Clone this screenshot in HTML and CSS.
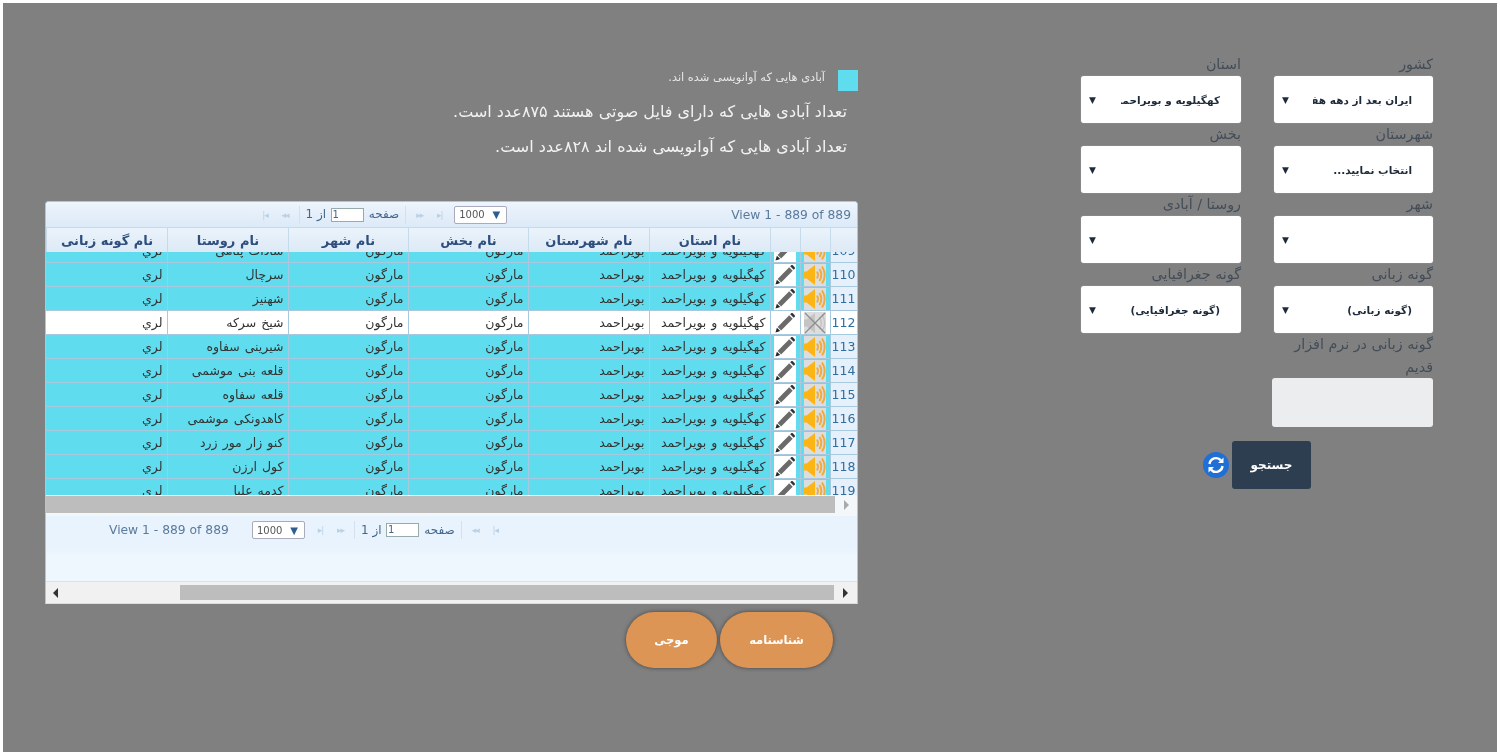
FILE: index.html
```html
<!DOCTYPE html>
<html lang="fa">
<head>
<meta charset="utf-8">
<title>جستجو</title>
<link rel="stylesheet" href="styles.css">
</head>
<body>
<svg class="defs" aria-hidden="true">
  <symbol id="pencil" viewBox="0 0 22 22">
    <path d="M1.500 20.500l1.400-4.700 3.300 3.300z" fill="#222"/>
    <path d="M3.600 14.900L15.200 3.300l3.500 3.500L7.100 18.400z" fill="#6a6a6a"/>
    <path d="M16.200 2.300l1-1c.5-.5 1.100-.5 1.600 0l1.900 1.900c.5.5.5 1.100 0 1.600l-1 1z" fill="#333"/>
  </symbol>
  <symbol id="speaker" viewBox="0 0 22 22">
    <path d="M0 7.500h2.500L11 1v20l-8.500-6.500H0z" fill="#fdb515"/>
    <path d="M13 7.500c1.300 2.300 1.300 4.700 0 7M15.500 5c2.300 3.800 2.300 8.200 0 12M18 2.500c3.500 5.500 3.500 11.500 0 17" fill="none" stroke="#f0ab40" stroke-width="2"/>
  </symbol>
  <symbol id="nosound" viewBox="0 0 22 22">
    <path d="M0 7.500h2.500L11 1v20l-8.500-6.500H0z" fill="#c4c4c4"/>
    <path d="M15.500 5c2.300 3.800 2.300 8.200 0 12M18 2.500c3.500 5.500 3.500 11.500 0 17" fill="none" stroke="#c4c4c4" stroke-width="1.500"/>
    <path d="M1 1l20 20M21 1L1 21" stroke="#8d8d8d" stroke-width="1.300"/>
  </symbol>
</svg>

<main class="stage">
  <section class="results">
    <div class="legend" dir="rtl">
      <span class="swatch"></span>
      <span class="legend-text">آبادی هایی که آوانویسی شده اند.</span>
    </div>
    <p class="stat" dir="rtl">تعداد آبادی هایی که دارای فایل صوتی هستند ۸۷۵عدد است.</p>
    <p class="stat" dir="rtl">تعداد آبادی هایی که آوانویسی شده اند ۸۲۸عدد است.</p>

    <div class="grid">
      <div class="pager pager-top">
        <div class="pager-nav">
          <span class="pg-icon">|◂</span><span class="pg-icon">◂◂</span>
          <span class="sep"></span>
          <span class="pg-text" dir="rtl">صفحه <span class="pg-input">1</span> از 1</span>
          <span class="sep"></span>
          <span class="pg-icon">▸▸</span><span class="pg-icon">▸|</span>
          <span class="pg-select">1000 <b>▼</b></span>
        </div>
        <span class="view">View 1 - 889 of 889</span>
      </div>

      <table class="thead" dir="rtl">
        <colgroup><col class="c-n"><col class="c-i"><col class="c-i"><col class="c-a"><col class="c-a"><col class="c-b"><col class="c-b"><col class="c-a"><col class="c-a"></colgroup>
        <tr><th></th><th></th><th></th><th>نام استان</th><th>نام شهرستان</th><th>نام بخش</th><th>نام شهر</th><th>نام روستا</th><th>نام گونه زبانی</th></tr>
      </table>

      <div class="tbody">
        <table class="rows" dir="rtl">
          <colgroup><col class="c-n"><col class="c-i"><col class="c-i"><col class="c-a"><col class="c-a"><col class="c-b"><col class="c-b"><col class="c-a"><col class="c-a"></colgroup>
          <tr><td class="num">109</td><td class="ic"><svg class="snd"><use href="#speaker"/></svg></td><td class="ic"><svg class="pen"><use href="#pencil"/></svg></td><td>کهگیلویه و بویراحمد</td><td>بویراحمد</td><td>مارگون</td><td>مارگون</td><td>سادات پناهی</td><td>لري</td></tr>
          <tr><td class="num">110</td><td class="ic"><svg class="snd"><use href="#speaker"/></svg></td><td class="ic"><svg class="pen"><use href="#pencil"/></svg></td><td>کهگیلویه و بویراحمد</td><td>بویراحمد</td><td>مارگون</td><td>مارگون</td><td>سرچال</td><td>لري</td></tr>
          <tr><td class="num">111</td><td class="ic"><svg class="snd"><use href="#speaker"/></svg></td><td class="ic"><svg class="pen"><use href="#pencil"/></svg></td><td>کهگیلویه و بویراحمد</td><td>بویراحمد</td><td>مارگون</td><td>مارگون</td><td>شهنیز</td><td>لري</td></tr>
          <tr class="plain"><td class="num">112</td><td class="ic"><svg class="snd"><use href="#nosound"/></svg></td><td class="ic"><svg class="pen"><use href="#pencil"/></svg></td><td>کهگیلویه و بویراحمد</td><td>بویراحمد</td><td>مارگون</td><td>مارگون</td><td>شیخ سرکه</td><td>لري</td></tr>
          <tr><td class="num">113</td><td class="ic"><svg class="snd"><use href="#speaker"/></svg></td><td class="ic"><svg class="pen"><use href="#pencil"/></svg></td><td>کهگیلویه و بویراحمد</td><td>بویراحمد</td><td>مارگون</td><td>مارگون</td><td>شیرینی سفاوه</td><td>لري</td></tr>
          <tr><td class="num">114</td><td class="ic"><svg class="snd"><use href="#speaker"/></svg></td><td class="ic"><svg class="pen"><use href="#pencil"/></svg></td><td>کهگیلویه و بویراحمد</td><td>بویراحمد</td><td>مارگون</td><td>مارگون</td><td>قلعه بنی موشمی</td><td>لري</td></tr>
          <tr><td class="num">115</td><td class="ic"><svg class="snd"><use href="#speaker"/></svg></td><td class="ic"><svg class="pen"><use href="#pencil"/></svg></td><td>کهگیلویه و بویراحمد</td><td>بویراحمد</td><td>مارگون</td><td>مارگون</td><td>قلعه سفاوه</td><td>لري</td></tr>
          <tr><td class="num">116</td><td class="ic"><svg class="snd"><use href="#speaker"/></svg></td><td class="ic"><svg class="pen"><use href="#pencil"/></svg></td><td>کهگیلویه و بویراحمد</td><td>بویراحمد</td><td>مارگون</td><td>مارگون</td><td>کاهدونکی موشمی</td><td>لري</td></tr>
          <tr><td class="num">117</td><td class="ic"><svg class="snd"><use href="#speaker"/></svg></td><td class="ic"><svg class="pen"><use href="#pencil"/></svg></td><td>کهگیلویه و بویراحمد</td><td>بویراحمد</td><td>مارگون</td><td>مارگون</td><td>کنو زار مور زرد</td><td>لري</td></tr>
          <tr><td class="num">118</td><td class="ic"><svg class="snd"><use href="#speaker"/></svg></td><td class="ic"><svg class="pen"><use href="#pencil"/></svg></td><td>کهگیلویه و بویراحمد</td><td>بویراحمد</td><td>مارگون</td><td>مارگون</td><td>کول ارزن</td><td>لري</td></tr>
          <tr><td class="num">119</td><td class="ic"><svg class="snd"><use href="#speaker"/></svg></td><td class="ic"><svg class="pen"><use href="#pencil"/></svg></td><td>کهگیلویه و بویراحمد</td><td>بویراحمد</td><td>مارگون</td><td>مارگون</td><td>کدمه علیا</td><td>لري</td></tr>
        </table>
      </div>

      <div class="hscroll inner">
        <span class="thumb"></span>
        <span class="arrow-box"><i class="tri tri-r faint"></i></span>
      </div>

      <div class="footer">
        <div class="pager pager-bot">
          <span class="view">View 1 - 889 of 889</span>
          <div class="pager-nav bot-nav">
            <span class="pg-select">1000 <b>▼</b></span>
            <span class="pg-icon">▸|</span><span class="pg-icon">▸▸</span>
            <span class="sep"></span>
            <span class="pg-text" dir="rtl">صفحه <span class="pg-input">1</span> از 1</span>
            <span class="sep"></span>
            <span class="pg-icon">◂◂</span><span class="pg-icon">|◂</span>
          </div>
        </div>
      </div>

      <div class="hscroll outer">
        <span class="arrow-left"><i class="tri tri-l"></i></span>
        <span class="thumb"></span>
        <span class="arrow-box"><i class="tri tri-r"></i></span>
      </div>
    </div>

    <div class="actions">
      <button class="pill pill-s" type="button">موجی</button>
      <button class="pill pill-l" type="button">شناسنامه</button>
    </div>
  </section>

  <form class="filters" dir="rtl">
    <div class="field"><label>کشور</label><div class="select"><span class="val">ایران بعد از دهه هفتاد</span><b class="caret">▼</b></div></div>
    <div class="field"><label>استان</label><div class="select"><span class="val">کهگیلویه و بویراحمد</span><b class="caret">▼</b></div></div>
    <div class="field"><label>شهرستان</label><div class="select"><span class="val">انتخاب نمایید...</span><b class="caret">▼</b></div></div>
    <div class="field"><label>بخش</label><div class="select"><span class="val"></span><b class="caret">▼</b></div></div>
    <div class="field"><label>شهر</label><div class="select"><span class="val"></span><b class="caret">▼</b></div></div>
    <div class="field"><label>روستا / آبادی</label><div class="select"><span class="val"></span><b class="caret">▼</b></div></div>
    <div class="field"><label>گونه زبانی</label><div class="select"><span class="val">(گونه زبانی)</span><b class="caret">▼</b></div></div>
    <div class="field"><label>گونه جغرافیایی</label><div class="select"><span class="val">(گونه جغرافیایی)</span><b class="caret">▼</b></div></div>
    <div class="field field-old"><label>گونه زبانی در نرم افزار قدیم</label><div class="readonly"></div></div>
    <div class="search-row">
      <button class="search" type="button">جستجو</button>
      <span class="refresh">
        <svg viewBox="0 0 26 26" width="26" height="26"><path d="M6.500 12a6.600 6.600 0 0 1 11.500-3.600M19.500 14a6.600 6.600 0 0 1-11.500 3.600" fill="none" stroke="#fff" stroke-width="2.400"/><path d="M20.500 5.500v5.500h-5.500zM5.500 20.500V15H11z" fill="#fff"/></svg>
      </span>
    </div>
  </form>
</main>
</body>
</html>
```

FILE: styles.css
```css
* { box-sizing: border-box; }
html, body { margin: 0; height: 100%; background: #fff; }
body { padding: 3px; font-family: "DejaVu Sans", "Liberation Sans", sans-serif; overflow: hidden; }
.defs { display: none; }

.stage {
  height: 749px;
  background: #808080;
  display: flex;
  justify-content: space-between;
  align-items: flex-start;
  padding: 0 64px 0 42px;
  filter: blur(.5px);
}

/* left column */
.results { width: 813px; padding-top: 66px; }
.legend { display: flex; align-items: center; gap: 13px; height: 22px; }
.swatch { width: 20px; height: 21px; background: #5fdcee; }
.legend-text { font-size: 11.400px; color: #e6e6e6; position: relative; top: -3px; }
.stat { margin: 0; font-size: 16px; line-height: 35px; color: #f2f2f2; padding-right: 11px; }
.stat:first-of-type { margin-top: 3px; }

.grid {
  margin-top: 37px;
  height: 403px;
  background: #fff;
  border: 1px solid #a6c9e2;
  border-bottom-color: #ddd;
  border-radius: 4px 4px 0 0;
  display: flex;
  flex-direction: column;
  overflow: hidden;
}
.pager { display: flex; align-items: center; color: #5a7ea3; font-size: 11px; }
.pager-top {
  height: 26px;
  flex: none;
  justify-content: flex-end;
  padding: 0 6px 0 0;
  background: linear-gradient(#edf5fd, #dce9f7);
  border-bottom: 1px solid #c5dbec;
}
.pager-nav { display: flex; align-items: center; gap: 5px; margin-right: 224px; }
.view { font-size: 12.300px; color: #5a7a9c; white-space: nowrap; }
.pg-icon { font-size: 9px; color: #bcd0e4; width: 15px; text-align: center; letter-spacing: -1px; }
.sep { width: 1px; height: 18px; background: #d3e0ee; margin: 0 1px; }
.pg-text { font-size: 12px; color: #44668c; white-space: nowrap; }
.pg-input {
  display: inline-block;
  width: 33px;
  height: 14px;
  line-height: 12px;
  margin: 0 1px;
  padding-right: 24px;
  font-size: 10px;
  background: #fff;
  border: 1px solid #9aa;
  vertical-align: middle;
}
.pg-select {
  display: flex;
  justify-content: space-between;
  align-items: center;
  width: 53px;
  height: 18px;
  margin-left: 2px;
  padding: 0 6px 0 4px;
  font-size: 10px;
  color: #555;
  background: #fff;
  border: 1px solid #aab;
  border-radius: 2px;
}
.pg-select b { color: #2e5e90; font-size: 10px; font-weight: 400; }

table { width: 811px; border-collapse: collapse; table-layout: fixed; }
.c-n { width: 27px; }
.c-i { width: 30px; }
.c-a { width: 121px; }
.c-b { width: 120px; }

.thead { flex: none; height: 24px; background: linear-gradient(#eaf3fb, #dde9f5); }
.thead th {
  height: 24px;
  padding: 0;
  font-size: 13px;
  font-weight: 700;
  color: #2e4e7e;
  border-left: 1px solid #c5dbec;
  white-space: nowrap;
}
.tbody { flex: none; height: 243px; overflow: hidden; background: #fff; }
.rows { margin-top: -14px; }
.rows td {
  height: 24px;
  padding: 0 4px 0 0;
  font-size: 12.500px;
  word-spacing: 1px;
  color: #333;
  background: #5fdcee;
  border: 1px solid #a6c9e0;
  border-width: 1px 1px 1px 0;
  white-space: nowrap;
  overflow: hidden;
}
.rows tr { height: 24px; }
.rows .plain td { background: #fff; }
.rows .num { background: #e6f0fb; color: #2e6e9e; font-size: 12.500px; text-align: center; padding: 0; }
.rows .ic { padding: 0; text-align: center; line-height: 0; }
.pen { width: 22px; height: 22px; background: #fff; }
.snd { width: 22px; height: 22px; background: #ddd; }

.hscroll { flex: none; display: flex; background: #f1f1f1; }
.hscroll.inner { height: 21px; padding: 1px 0 3px; background: #f4f7fa; }
.hscroll.inner .thumb { width: 789px; }
.hscroll.outer { height: 22px; padding: 3px 0; border-top: 1px solid #d5e3f0; }
.hscroll.outer .thumb { width: 654px; }
.thumb { background: #bdbdbd; }
.arrow-box, .arrow-left { display: flex; align-items: center; justify-content: center; }
.arrow-box { flex: 1; }
.arrow-left { width: 134px; justify-content: flex-start; padding-left: 7px; }
.tri { display: block; width: 0; height: 0; border: 5px solid transparent; }
.tri-r { border-left-color: #333; border-right-width: 0; }
.tri-l { border-right-color: #333; border-left-width: 0; }
.tri-r.faint { border-left-color: #a9a9a9; }

.footer { flex: 1; background: linear-gradient(#e8f3fd 0, #e8f3fd 31px, #eef6fe 40px); }
.pager-bot { height: 28px; padding: 0 0 0 63px; }
.pager-bot .view { width: 143px; }
.bot-nav { margin: 0; }
.bot-nav .pg-select { margin: 0 3px 0 0; }

.actions { display: flex; justify-content: flex-end; gap: 3px; margin: 8px 25px 0 0; }
.pill {
  height: 56px;
  border: 0;
  border-radius: 28px;
  background: #dd9555;
  box-shadow: 0 0 4px #444;
  color: #fff;
  font: 700 11.500px "DejaVu Sans", sans-serif;
  padding: 0;
}
.pill-s { width: 91px; }
.pill-l { width: 113px; }

/* right column */
.filters {
  width: 352px;
  padding-top: 50px;
  display: grid;
  grid-template-columns: 159px 160px;
  column-gap: 33px;
  align-items: start;
}
.field { height: 70px; }
.field label { display: block; height: 23px; font-size: 14.300px; line-height: 23px; color: #434d58; white-space: nowrap; }
.select {
  height: 47px;
  display: flex;
  align-items: center;
  justify-content: space-between;
  padding: 0 21px 0 8px;
  background: #fff;
  border-radius: 3px;
  box-shadow: 0 0 1px #ccc;
}
.val { width: 99px; overflow: hidden; white-space: nowrap; font-size: 10.500px; font-weight: 700; color: #1c2a3a; }
.caret { font-size: 9px; font-weight: 400; color: #1c2a3a; }
.field-old { grid-column: 1; height: auto; }
.field-old label { height: auto; white-space: normal; line-height: 23px; margin-top: 0; }
.readonly { width: 161px; height: 49px; margin-top: -1px; background: #ecedef; border-radius: 3px; }
.search-row { grid-column: 1 / -1; display: flex; align-items: center; gap: 3px; margin: 14px 122px 0 0; }
.search {
  width: 79px;
  height: 48px;
  border: 0;
  border-radius: 3px;
  background: #2c3e50;
  color: #fff;
  font: 700 12px "DejaVu Sans", sans-serif;
  padding: 0;
}
.refresh { width: 26px; height: 26px; border-radius: 50%; background: #1f6fd6; }
.refresh svg { display: block; }
```
